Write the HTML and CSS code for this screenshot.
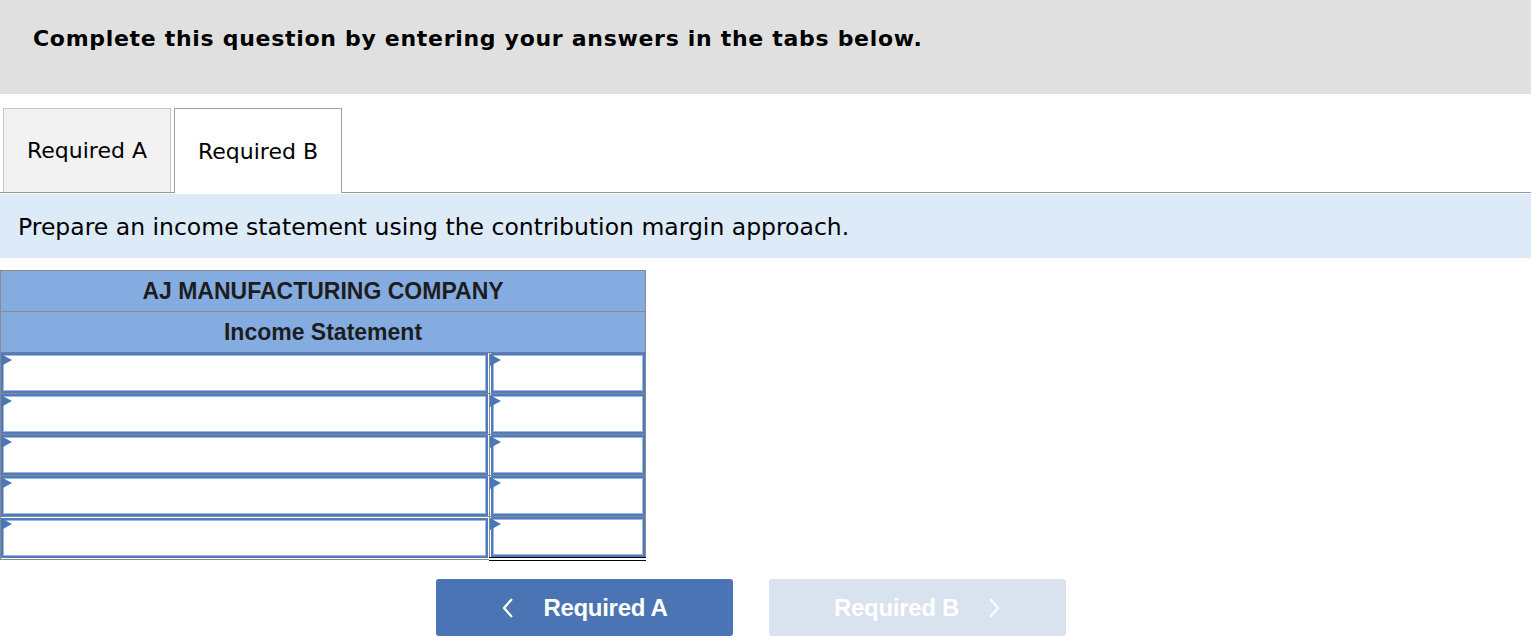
FILE: index.html
```html
<!DOCTYPE html>
<html>
<head>
<meta charset="utf-8">
<link rel="stylesheet" href="styles.css">
</head>
<body>
<div class="page">
  <div class="banner">Complete this question by entering your answers in the tabs below.</div>
  <div class="tabs">
    <div class="tab tab-off">Required A</div>
    <div class="tab tab-on">Required B</div>
  </div>
  <div class="instruction">Prepare an income statement using the contribution margin approach.</div>
  <table class="stmt">
    <tr><th colspan="2" class="title">AJ MANUFACTURING COMPANY</th></tr>
    <tr><th colspan="2" class="subtitle">Income Statement</th></tr>
    <tr><td class="c1"><span class="mark"></span><div class="box"></div></td><td class="c2"><span class="mark"></span><div class="box"></div></td></tr>
    <tr><td class="c1"><span class="mark"></span><div class="box"></div></td><td class="c2"><span class="mark"></span><div class="box"></div></td></tr>
    <tr><td class="c1"><span class="mark"></span><div class="box"></div></td><td class="c2 line-top"><span class="mark"></span><div class="box"></div></td></tr>
    <tr><td class="c1"><span class="mark"></span><div class="box"></div></td><td class="c2"><span class="mark"></span><div class="box"></div></td></tr>
    <tr><td class="c1"><span class="mark"></span><div class="box"></div></td><td class="c2 line-top dbl"><span class="mark"></span><div class="box"></div></td></tr>
  </table>
  <div class="nav">
    <div class="btn btn-prev">
      <svg class="chev" width="14" height="22" viewBox="0 0 14 22"><path d="M11 2 L3 11 L11 20" fill="none" stroke="#fff" stroke-width="2.2"/></svg>
      <span>Required A</span>
    </div>
    <div class="btn btn-next">
      <span>Required B</span>
      <svg class="chev" width="14" height="22" viewBox="0 0 14 22"><path d="M3 2 L11 11 L3 20" fill="none" stroke="#fff" stroke-width="2.2"/></svg>
    </div>
  </div>
</div>
</body>
</html>
```
FILE: styles.css
```css
html, body { margin: 0; padding: 0; background: #fff; }
.page { width: 1531px; font-family: "DejaVu Sans", Verdana, sans-serif; color: #000; }
.banner {
  height: 94px; background: #e0e0e0; box-sizing: border-box;
  padding: 25px 0 0 33px; font-size: 22px; font-weight: bold; line-height: 28px; letter-spacing: 0.7px;
}
.tabs {
  margin-top: 14px; display: flex; gap: 3px; padding-left: 3px;
  border-bottom: 1px solid #9a9a9a; height: 84px; box-sizing: content-box;
}
.tab {
  width: 168px; height: 85px; box-sizing: border-box; font-size: 22px;
  display: flex; align-items: center; justify-content: center; padding-bottom: 0;
}
.tab-off { background: #f2f2f2; border: 1px solid #c6c6c6; border-bottom: none; height: 84px; }
.tab-on { background: #fff; border: 1px solid #a0a0a0; border-bottom: none; position: relative; z-index: 1; }
.instruction {
  margin-top: 1px; height: 64px; background: #ddeaf7; box-sizing: border-box;
  padding: 19px 0 0 18px; font-size: 23.5px; line-height: 28px;
}
.stmt {
  margin-top: 12px; border-collapse: collapse; width: 646px;
  font-family: "Liberation Sans", Arial, sans-serif;
}
.stmt th {
  background: #85ace0; color: #1d1d1d; font-weight: bold; height: 40px; padding: 0;
  border: 1px solid #8a8a8a; text-align: center;
}
.stmt .title { font-size: 23px; }
.stmt .subtitle { font-size: 23px; border-bottom: 1px solid #6a7fa0; }
.stmt td { border: 1px solid #8a8a8a; padding: 0 1px; height: 40px; position: relative; vertical-align: middle; }
.stmt td.c1 { width: 487px; padding-left: 0; }
.stmt td.c2 { padding-right: 0; }
.stmt td.line-top { border-top: 1px solid #000; }
.stmt td.dbl { border-bottom: 4px double #000; }
.box {
  height: 40px; box-sizing: border-box; border: 2px solid #4e7cbe;
  box-shadow: inset 0 0 0 1px #9db8df; background: #fff;
}
.mark {
  position: absolute; left: 0; top: 1px; width: 0; height: 0;
  border-top: 6px solid transparent; border-bottom: 6px solid transparent;
  border-left: 11px solid #4a77b8; z-index: 1;
}
.nav { display: flex; gap: 36px; padding-left: 436px; margin-top: 18px; }
.btn {
  width: 297px; height: 57px; border-radius: 3px; display: flex; align-items: center;
  justify-content: center; gap: 28px; color: #fff; font-family: "Liberation Sans", Arial, sans-serif;
  font-weight: bold; font-size: 24px; letter-spacing: -0.3px;
}
.btn-prev { background: #4a74b4; }
.btn-next { background: #d9e2ef; }
.chev { display: block; }
```
